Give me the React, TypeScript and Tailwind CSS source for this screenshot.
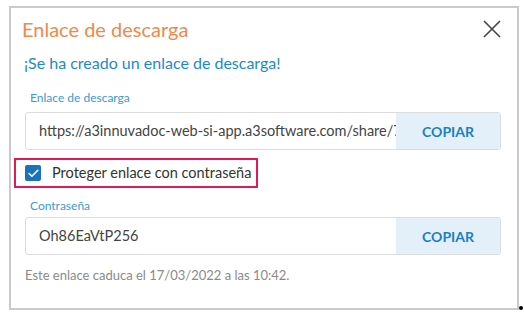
import { Check } from "lucide-react";

const font = { fontFamily: "Lato, 'Noto Sans', sans-serif" };

function CopyField({ value }: { value: string }) {
  return (
    <div className="flex h-[38px] w-[476px] overflow-hidden rounded-[3px] border border-[#dcdcdc]">
      <div className="flex min-w-0 flex-1 items-center overflow-hidden whitespace-nowrap pl-[13px] text-[14.5px] text-[#444]">
        {value}
      </div>
      <button className="w-[104px] shrink-0 bg-[#e3f0fa] text-[14px] font-bold text-[#1a7fc4]">
        COPIAR
      </button>
    </div>
  );
}

export default function App() {
  return (
    <div className="relative h-[318px] w-[524px] bg-white" style={font}>
      <div className="ml-[9px] mt-[6px] h-[304px] w-[510px] border-2 border-[#cacaca] pl-[14px] pr-[16px]">
        <div className="flex items-start justify-between">
          <h1 className="-ml-[3px] mt-[7px] text-[20px] leading-[28px] text-[#f0894a]">
            Enlace de descarga
          </h1>
          <button className="mr-[-1px] mt-[11px] text-[#444]">
            <svg width="20" height="20" viewBox="0 0 20 20" fill="none" stroke="currentColor" strokeWidth="1.6">
              <path d="M2 2 L18 18 M18 2 L2 18" />
            </svg>
          </button>
        </div>
        <p className="-ml-[1px] mt-[9px] text-[16px] leading-[22px] text-[#1a8ad0]">
          ¡Se ha creado un enlace de descarga!
        </p>
        <label className="ml-[5px] mt-[16px] block text-[12px] leading-[16px] text-[#3a9ad9]">
          Enlace de descarga
        </label>
        <div className="mt-[6px]">
          <CopyField value="https://a3innuvadoc-web-si-app.a3software.com/share/7D" />
        </div>
        <div className="-ml-[11px] mt-[8px] flex h-[30px] w-[244px] items-center whitespace-nowrap border-2 border-[#e0195a] pl-[9px]">
          <span className="flex h-[16px] w-[16px] shrink-0 items-center justify-center rounded-[2px] bg-[#1a73b8]">
            <Check size={13} strokeWidth={3} className="text-white" />
          </span>
          <span className="ml-[11px] text-[14.5px] text-[#333]">Proteger enlace con contraseña</span>
        </div>
        <label className="ml-[5px] mt-[10px] block text-[12px] leading-[16px] text-[#3a9ad9]">
          Contraseña
        </label>
        <div className="mt-[3px]">
          <CopyField value="Oh86EaVtP256" />
        </div>
        <p className="mt-[11px] text-[13px] leading-[18px] text-[#8a8a8a]">
          Este enlace caduca el 17/03/2022 a las 10:42.
        </p>
      </div>
      <span className="absolute left-[519px] top-[300px] h-[4px] w-[4px] rounded-full bg-black" />
    </div>
  );
}
